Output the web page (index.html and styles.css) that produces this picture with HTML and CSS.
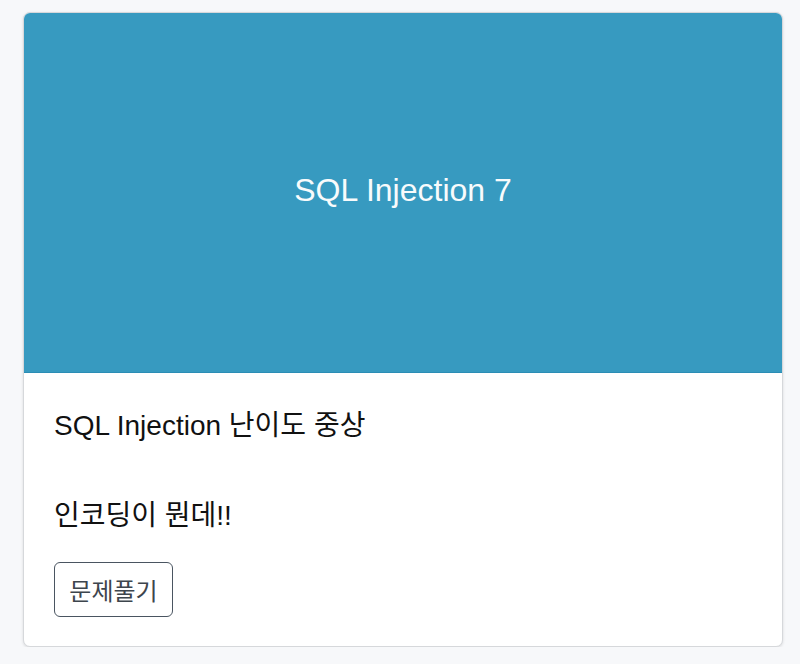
FILE: index.html
```html
<!DOCTYPE html>
<html lang="ko">
<head>
<meta charset="utf-8">
<link rel="stylesheet" href="styles.css">
</head>
<body>
<div class="page">
  <div class="card">
    <div class="card-head">SQL Injection 7</div>
    <div class="card-body">
      <h5 class="card-title">SQL Injection 난이도 중상</h5>
      <p class="card-text">인코딩이 뭔데!!</p>
      <a class="btn">문제풀기</a>
    </div>
  </div>
</div>
</body>
</html>
```

FILE: styles.css
```css
html, body {
  margin: 0;
  padding: 0;
  background: #f7f8fa;
  font-family: "Liberation Sans", "Noto Sans CJK KR", sans-serif;
}
.page {
  padding: 12px 18px 0 23px;
}
.card {
  width: 758px;
  background: #fff;
  border: 1px solid #d6d8db;
  border-radius: 7px;
  box-shadow: 0 1px 3px rgba(0,0,0,0.12);
  overflow: hidden;
}
.card-head {
  box-sizing: border-box;
  height: 360px;
  padding-bottom: 4px;
  background: #379ac0;
  border-bottom: 1px solid #2b8db5;
  color: #f8fbfc;
  font-size: 32px;
  display: flex;
  align-items: center;
  justify-content: center;
}
.card-body {
  padding: 35px 30px 29px 30px;
  display: flex;
  flex-direction: column;
  align-items: flex-start;
  color: #111;
}
.card-title {
  margin: 0;
  font-size: 28px;
  font-weight: normal;
  line-height: 36px;
}
.card-text {
  margin: 54px 0 0 0;
  font-size: 28px;
  line-height: 36px;
}
.btn {
  margin-top: 28px;
  box-sizing: border-box;
  width: 119px;
  height: 55px;
  border: 1.5px solid #4a5561;
  border-radius: 6px;
  color: #3d454d;
  font-size: 24px;
  display: flex;
  align-items: center;
  justify-content: center;
}
```
